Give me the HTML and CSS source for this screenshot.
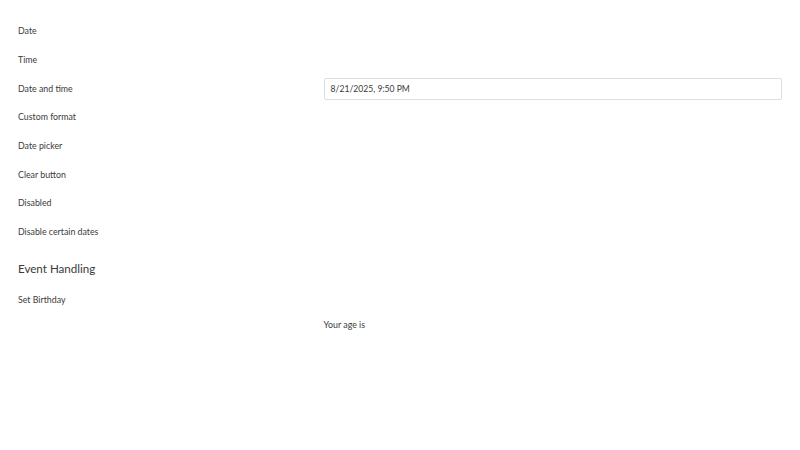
FILE: index.html
```html
<!DOCTYPE html>
<html lang="en">
<head>
<meta charset="utf-8">
<link rel="stylesheet" href="styles.css">
</head>
<body>
<div class="page">
  <div class="form">
    <div class="row"><div class="label">Date</div><div class="ctrl"></div></div>
    <div class="row"><div class="label">Time</div><div class="ctrl"></div></div>
    <div class="row"><div class="label">Date and time</div><div class="ctrl"><div class="input">8/21/2025, 9:50 PM</div></div></div>
    <div class="row"><div class="label">Custom format</div><div class="ctrl"></div></div>
    <div class="row"><div class="label">Date picker</div><div class="ctrl"></div></div>
    <div class="row"><div class="label">Clear button</div><div class="ctrl"></div></div>
    <div class="row"><div class="label">Disabled</div><div class="ctrl"></div></div>
    <div class="row"><div class="label">Disable certain dates</div><div class="ctrl"></div></div>
  </div>
  <h2 class="heading">Event Handling</h2>
  <div class="form">
    <div class="row"><div class="label">Set Birthday</div><div class="ctrl"></div></div>
    <div class="row short"><div class="label"></div><div class="ctrl">Your age is</div></div>
  </div>
</div>
</body>
</html>
```
FILE: styles.css
```css
html, body {
  margin: 0;
  padding: 0;
  background: #ffffff;
}
body {
  font-family: "Segoe UI", Lato, "Noto Sans", sans-serif;
  font-size: 8.8px;
  color: #3b3a39;
}
.page {
  padding: 17px 18px;
}
.form {
  display: flex;
  flex-direction: column;
}
.row {
  display: grid;
  grid-template-columns: 40% 60%;
  align-items: center;
  height: 28.7px;
}
.row.short {
  height: 20px;
}
.label {
  line-height: 12px;
}
.input {
  height: 20px;
  border: 1px solid #e1dfdd;
  border-radius: 2px;
  display: flex;
  align-items: center;
  padding: 0 6px;
  font-size: 8.6px;
}
.heading {
  margin: 14px 0 9px;
  font-size: 11.6px;
  font-weight: 400;
  line-height: 16px;
}
```
